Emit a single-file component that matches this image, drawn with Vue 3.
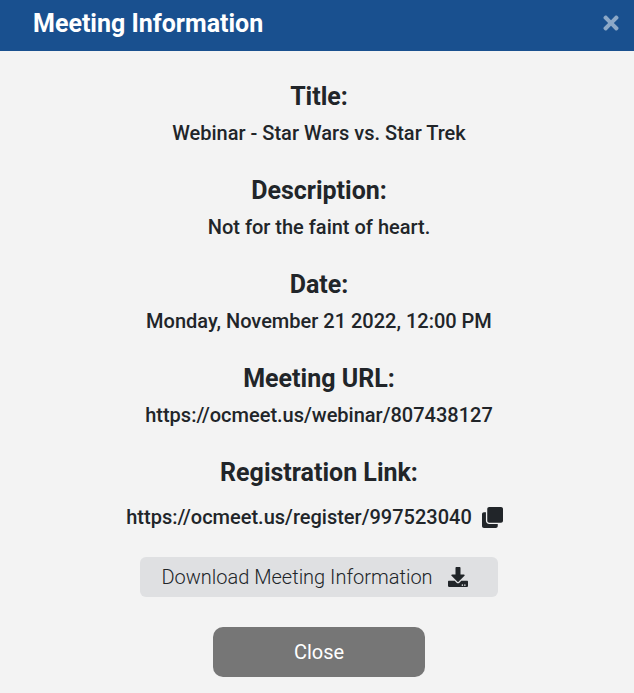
<template>
  <div class="modal">
    <header class="modal-header">
      <h1 class="modal-title">Meeting Information</h1>
      <button class="modal-x" aria-label="Close">
        <svg viewBox="0 0 352 512" width="16" height="22" fill="currentColor">
          <path d="M242.72 256l100.07-100.07c12.28-12.28 12.28-32.19 0-44.48l-22.24-22.24c-12.28-12.28-32.19-12.28-44.48 0L176 189.28 75.93 89.21c-12.28-12.28-32.19-12.28-44.48 0L9.21 111.45c-12.28 12.28-12.28 32.19 0 44.48L109.28 256 9.21 356.07c-12.28 12.28-12.28 32.19 0 44.48l22.24 22.24c12.28 12.28 32.2 12.28 44.48 0L176 322.72l100.07 100.07c12.28 12.28 32.2 12.28 44.48 0l22.24-22.24c12.28-12.28 12.28-32.19 0-44.48L242.72 256z" />
        </svg>
      </button>
    </header>

    <div class="modal-body">
      <section v-for="item in items" :key="item.label" class="info">
        <h2 class="info-label">{{ item.label }}</h2>
        <p class="info-value">{{ item.value }}</p>
      </section>

      <section class="info">
        <h2 class="info-label">Registration Link:</h2>
        <p class="info-value link-row">
          <span>https://ocmeet.us/register/997523040</span>
          <svg class="copy-icon" viewBox="0 0 512 512" width="21" height="21" fill="currentColor">
            <path d="M464 0c26.51 0 48 21.49 48 48v288c0 26.51-21.49 48-48 48H176c-26.51 0-48-21.49-48-48V48c0-26.51 21.49-48 48-48h288M176 416c-44.112 0-80-35.888-80-80V128H48c-26.51 0-48 21.49-48 48v288c0 26.51 21.49 48 48 48h288c26.51 0 48-21.49 48-48v-48H176z" />
          </svg>
        </p>
      </section>

      <button class="download-btn">
        <span>Download Meeting Information</span>
        <svg viewBox="0 0 512 512" width="20" height="20" fill="currentColor" class="download-icon">
          <path d="M216 0h80c13.3 0 24 10.7 24 24v168h87.7c17.8 0 26.7 21.5 14.1 34.1L269.7 378.3c-7.5 7.5-19.8 7.5-27.3 0L90.1 226.1c-12.6-12.6-3.7-34.1 14.1-34.1H192V24c0-13.3 10.7-24 24-24zm296 376v112c0 13.3-10.7 24-24 24H24c-13.3 0-24-10.7-24-24V376c0-13.3 10.7-24 24-24h146.7l49 49c20.1 20.1 52.5 20.1 72.6 0l49-49H488c13.3 0 24 10.7 24 24zm-124 88c0-11-9-20-20-20s-20 9-20 20 9 20 20 20 20-9 20-20zm64 0c0-11-9-20-20-20s-20 9-20 20 9 20 20 20 20-9 20-20z" />
        </svg>
      </button>

      <button class="close-btn">Close</button>
    </div>
  </div>
</template>

<script setup>
const items = [
  { label: 'Title:', value: 'Webinar - Star Wars vs. Star Trek' },
  { label: 'Description:', value: 'Not for the faint of heart.' },
  { label: 'Date:', value: 'Monday, November 21 2022, 12:00 PM' },
  { label: 'Meeting URL:', value: 'https://ocmeet.us/webinar/807438127' }
]
</script>

<style scoped>
.modal {
  width: 634px;
  height: 693px;
  overflow: hidden;
  background: #f3f3f3;
  font-family: Roboto, "Liberation Sans", sans-serif;
  color: #212529;
}

.modal-header {
  height: 51px;
  box-sizing: border-box;
  padding: 0 15px 5px 33px;
  background: #19508f;
  display: flex;
  align-items: center;
  justify-content: space-between;
}

.modal-title {
  margin: 0;
  font-size: 25px;
  font-weight: 700;
  color: #fff;
}

.modal-x {
  padding: 0;
  border: none;
  background: none;
  color: rgba(255, 255, 255, 0.5);
  display: flex;
}

.modal-body {
  padding: 31px 0 0 4px;
  display: flex;
  flex-direction: column;
  align-items: center;
}

.info {
  height: 94px;
  text-align: center;
}

.info-label {
  margin: 0;
  font-size: 25px;
  line-height: 30px;
  font-weight: 700;
}

.info-value {
  margin: 7px 0 0;
  font-size: 20px;
  line-height: 28px;
  font-weight: 500;
}

.link-row {
  display: flex;
  align-items: center;
  justify-content: center;
  gap: 10px;
  margin-top: 15px;
  padding-right: 9px;
}

.copy-icon {
  color: #212529;
}

.download-btn {
  width: 358px;
  height: 40px;
  margin-top: 5px;
  padding: 0 9px 0 0;
  border: none;
  border-radius: 6px;
  background: #dfe0e2;
  color: #212529;
  font-family: inherit;
  font-size: 20px;
  font-weight: 300;
  display: flex;
  align-items: center;
  justify-content: center;
  gap: 15px;
}

.close-btn {
  width: 212px;
  height: 50px;
  margin-top: 30px;
  border: none;
  border-radius: 10px;
  background: #767676;
  color: #fff;
  font-family: inherit;
  font-size: 20px;
  font-weight: 400;
}
</style>
